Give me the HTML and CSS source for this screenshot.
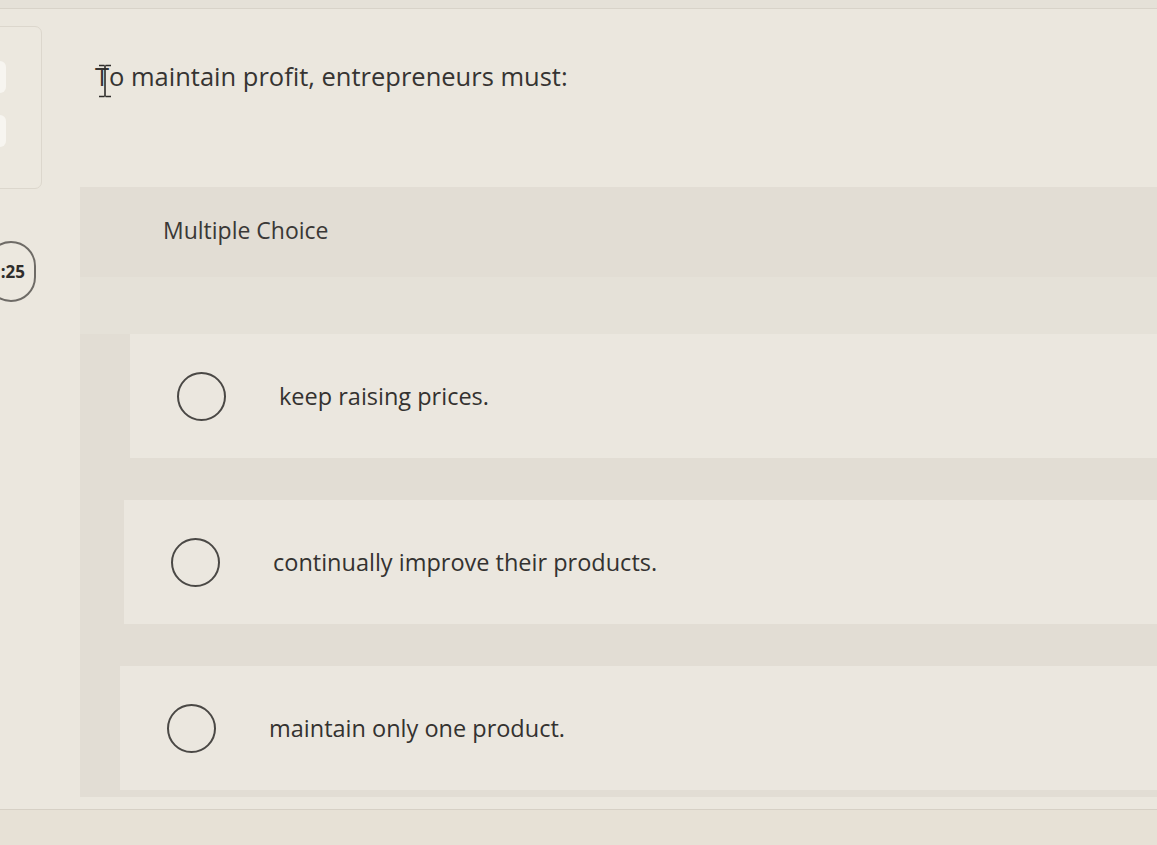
FILE: index.html
```html
<!DOCTYPE html>
<html lang="en">
<head>
<meta charset="utf-8">
<title>Multiple Choice</title>
<link rel="stylesheet" href="styles.css">
</head>
<body>
<div class="topbar"></div>
<div class="page">
  <aside class="side">
    <div class="side-card">
      <span class="side-mark"></span>
      <span class="side-mark"></span>
    </div>
    <div class="badge">:25</div>
  </aside>
  <main class="content">
    <div class="question">
      <svg class="cursor" width="16" height="34" viewBox="0 0 16 34" aria-hidden="true">
        <path d="M2 1.5h5.5M8.5 1.5H14M8 1.5v31M2 32.5h5.5M8.5 32.5H14" fill="none" stroke="#2e2c2a" stroke-width="1.6"/>
      </svg>
      <p class="question-text">To maintain profit, entrepreneurs must:</p>
    </div>
    <section class="panel">
      <div class="panel-head">Multiple Choice</div>
      <div class="panel-band"></div>
      <div class="options">
        <label class="option option-1"><span class="radio"></span><span class="option-text">keep raising prices.</span></label>
        <label class="option option-2"><span class="radio"></span><span class="option-text">continually improve their products.</span></label>
        <label class="option option-3"><span class="radio"></span><span class="option-text">maintain only one product.</span></label>
      </div>
    </section>
  </main>
</div>
<div class="footer-line"></div>
</body>
</html>
```
FILE: styles.css
```css
* { box-sizing: border-box; }
html, body { margin: 0; padding: 0; }
body {
  width: 1157px;
  height: 845px;
  overflow: hidden;
  background: #ebe7de;
  font-family: "Open Sans", Lato, sans-serif;
  color: #383634;
}
.topbar {
  height: 9px;
  background: #e5e1d8;
  border-bottom: 1px solid #d8d3c9;
}
.page {
  display: flex;
  height: 800px;
}
.side {
  width: 80px;
  flex: none;
  display: flex;
  flex-direction: column;
}
.side-card {
  margin-top: 17px;
  margin-left: -10px;
  width: 52px;
  height: 163px;
  border: 1px solid #dcd7cd;
  border-radius: 7px;
  background: #ece8df;
  display: flex;
  flex-direction: column;
  gap: 22px;
  padding-top: 34px;
}
.side-mark {
  display: block;
  width: 15px;
  height: 32px;
  border-radius: 6px;
  background: #f7f5f0;
}
.badge {
  margin-top: 52px;
  margin-left: -14px;
  width: 50px;
  height: 61px;
  border: 2px solid #6e6b66;
  border-radius: 30px;
  display: flex;
  align-items: center;
  justify-content: flex-end;
  padding-right: 9px;
  font-weight: 700;
  font-size: 17px;
  color: #2f2d2b;
  background: #ece8df;
  white-space: nowrap;
}
.content {
  flex: 1;
  display: flex;
  flex-direction: column;
}
.question {
  position: relative;
  height: 178px;
  padding-left: 15px;
  padding-top: 50px;
}
.question-text {
  margin: 0;
  font-size: 25.5px;
  color: #363432;
}
.cursor {
  position: absolute;
  left: 17px;
  top: 55px;
}
.panel {
  background: #e2ddd4;
  flex: 1;
  display: flex;
  flex-direction: column;
  margin-bottom: 12px;
}
.panel-head {
  height: 90px;
  padding-left: 83px;
  padding-top: 27px;
  font-size: 23px;
  color: #3a3836;
}
.panel-band {
  height: 57px;
  background: #e5e1d8;
}
.options {
  display: flex;
  flex-direction: column;
  gap: 42px;
}
.option {
  display: flex;
  align-items: center;
  height: 124px;
  background: #ebe7df;
  padding-left: 47px;
}
.option-1 { margin-left: 50px; }
.option-2 { margin-left: 44px; }
.option-3 { margin-left: 40px; }
.radio {
  width: 49px;
  height: 49px;
  border: 2px solid #4a4845;
  border-radius: 50%;
  flex: none;
}
.option-text {
  margin-left: 53px;
  font-size: 23.5px;
  color: #343230;
}
.footer-line {
  border-top: 1px solid #d6d0c5;
  height: 45px;
  background: #e7e1d6;
}
```
